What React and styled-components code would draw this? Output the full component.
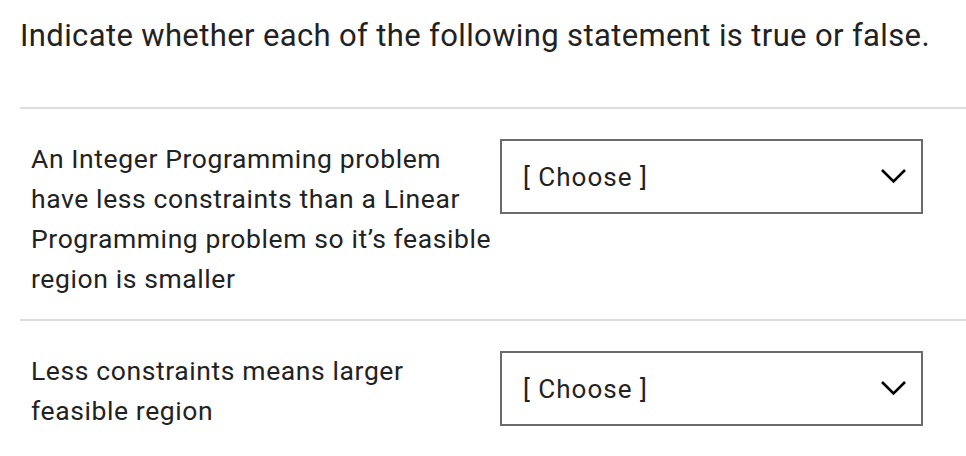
import React from "react";
import styled, { createGlobalStyle } from "styled-components";

const Global = createGlobalStyle`
  html, body { margin: 0; padding: 0; background: #fff; }
  body { font-family: Roboto, "Noto Sans", "Liberation Sans", sans-serif; color: #222; }
`;

const Page = styled.div`
  padding: 14px 0 0 20px;
`;

const Title = styled.h1`
  margin: 0;
  font-size: 31px;
  letter-spacing: 0.37px;
  font-weight: 400;
  line-height: 44px;
  color: #222;
`;

const Divider = styled.hr`
  margin: ${(p) => p.$top}px 0 0 0;
  border: 0;
  height: 2px;
  background: #dddddd;
`;

const Row = styled.div`
  display: grid;
  grid-template-columns: 466px 423px;
  column-gap: 3px;
  align-items: start;
  padding: 30px 0 ${(p) => p.$bottom}px 11px;
`;

const Statement = styled.div`
  font-size: 26.5px;
  letter-spacing: 0.6px;
  line-height: 40px;
  color: #222;
`;

const Select = styled.div`
  box-sizing: border-box;
  height: 75px;
  border: 2px solid #6b6b6f;
  display: flex;
  align-items: center;
  justify-content: space-between;
  padding: 0 14px 0 21px;
  font-size: 26px;
  letter-spacing: 1px;
  color: #222;
`;

const Chevron = () => (
  <svg width="27" height="17" viewBox="0 0 27 17">
    <path d="M2 2 L13.5 13.5 L25 2" fill="none" stroke="#000" strokeWidth="2.6" />
  </svg>
);

const items = [
  {
    text: "An Integer Programming problem have less constraints than a Linear Programming problem so it\u2019s feasible region is smaller",
    bottom: 20,
  },
  { text: "Less constraints means larger feasible region", bottom: 20 },
];

export default function App() {
  return (
    <>
      <Global />
      <Page>
        <Title>Indicate whether each of the following statement is true or false.</Title>
        {items.map((it, i) => (
          <React.Fragment key={i}>
            <Divider $top={i === 0 ? 49 : 0} />
            <Row $bottom={it.bottom}>
              <Statement>{it.text}</Statement>
              <Select>
                <span>[ Choose ]</span>
                <Chevron />
              </Select>
            </Row>
          </React.Fragment>
        ))}
      </Page>
    </>
  );
}
